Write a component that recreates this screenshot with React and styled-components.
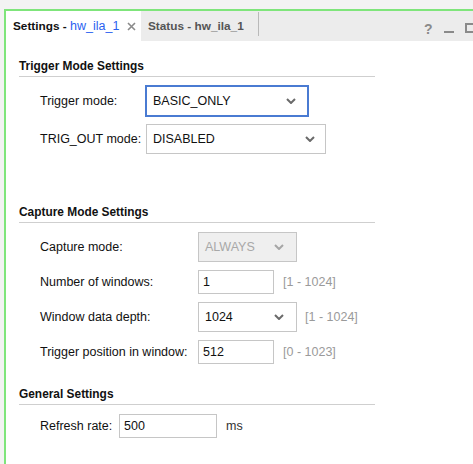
import React from "react";
import styled, { createGlobalStyle } from "styled-components";

const GlobalStyle = createGlobalStyle`
  html, body { margin: 0; padding: 0; }
  body {
    background: #f3f3f3;
    font-family: "Liberation Sans", Arial, sans-serif;
    color: #111;
    overflow: hidden;
  }
`;

const Frame = styled.div`
  margin: 9px 0 0 4px;
  height: 455px;
  border-top: 2px solid #7fe57b;
  border-left: 2px solid #7fe57b;
  background: #fff;
  display: flex;
  flex-direction: column;
`;

const TabBar = styled.div`
  display: flex;
  align-items: stretch;
  height: 30px;
  background: #ececec;
`;

const Tab = styled.div`
  display: flex;
  align-items: center;
  box-sizing: border-box;
  width: ${(p) => p.$width}px;
  padding-left: 7px;
  background: ${(p) => (p.$active ? "#fff" : "transparent")};
  font-size: 11.8px;
  font-weight: bold;
  color: ${(p) => (p.$active ? "#111" : "#555")};
  white-space: pre;
`;

const TabSub = styled.span`
  font-weight: normal;
  font-size: 12.5px;
  color: #2a5ff0;
`;

const CloseIcon = styled.svg`
  margin-left: 8px;
  margin-top: 1px;
`;

const Separator = styled.div`
  width: 1px;
  background: #b9b9b9;
  margin: 1px 0 5px 0;
`;

const WindowButtons = styled.div`
  margin-left: auto;
  display: flex;
  align-items: center;
  gap: 11px;
  padding-top: 1px;
`;

const HelpGlyph = styled.span`
  font-size: 14px;
  font-weight: bold;
  color: #8a8a8a;
  width: 9px;
  margin-top: 4px;
`;

const MinGlyph = styled.span`
  width: 10px;
  height: 2px;
  background: #8a8a8a;
  margin-top: 10px;
`;

const MaxGlyph = styled.span`
  box-sizing: border-box;
  width: 10px;
  height: 10px;
  border: 2px solid #8a8a8a;
  margin-top: 3px;
  margin-right: -2px;
`;

const Content = styled.div`
  padding-left: 13px;
  display: flex;
  flex-direction: column;
`;

const SectionHeader = styled.div`
  margin-top: ${(p) => p.$top}px;
  width: 356px;
  height: 19px;
  line-height: 19px;
  font-size: 11.9px;
  font-weight: bold;
  color: #111;
  border-bottom: 1px solid #cfcfcf;
`;

const Rows = styled.div`
  margin-top: ${(p) => p.$top}px;
  padding-left: 21px;
  display: flex;
  flex-direction: column;
  gap: ${(p) => p.$gap}px;
`;

const Row = styled.div`
  display: grid;
  grid-template-columns: ${(p) => p.$label}px auto auto;
  justify-content: start;
  align-items: center;
  height: 30px;
`;

const Label = styled.span`
  font-size: 12.5px;
  color: #111;
  white-space: nowrap;
`;

const SelectBox = styled.div`
  box-sizing: border-box;
  width: ${(p) => p.$width}px;
  height: 30px;
  display: flex;
  align-items: center;
  padding: 0 ${(p) => p.$right}px 0 6px;
  border: 1px solid ${(p) => (p.$focused ? "#4a7bd2" : "#c6c6c6")};
  box-shadow: ${(p) => (p.$focused ? "0 0 0 1px #4a7bd2" : "none")};
  background: ${(p) => (p.$disabled ? "#efefef" : "#fff")};
  color: ${(p) => (p.$disabled ? "#a8a8a8" : "#111")};
  font-size: 12.5px;
`;

const SelectText = styled.span`
  flex: 1;
`;

const InputBox = styled.div`
  box-sizing: border-box;
  width: ${(p) => p.$width}px;
  height: 24px;
  display: flex;
  align-items: center;
  padding-left: 4px;
  border: 1px solid #c6c6c6;
  background: #fff;
  font-size: 12.5px;
  color: #111;
`;

const Hint = styled.span`
  font-size: 12.5px;
  color: ${(p) => (p.$dark ? "#333" : "#9a9a9a")};
  margin-left: ${(p) => p.$offset}px;
`;

const Chevron = ({ disabled }) => (
  <svg width="10" height="6" viewBox="0 0 10 6">
    <polyline
      points="1,1 5,5 9,1"
      fill="none"
      stroke={disabled ? "#a6a6a6" : "#6a6a6a"}
      strokeWidth="2"
    />
  </svg>
);

const Select = ({ value, width, right = 11, focused, disabled }) => (
  <SelectBox $width={width} $right={right} $focused={focused} $disabled={disabled}>
    <SelectText>{value}</SelectText>
    <Chevron disabled={disabled} />
  </SelectBox>
);

export default function App() {
  return (
    <>
      <GlobalStyle />
      <Frame>
        <TabBar>
          <Tab $active $width={135}>
            {"Settings - "}
            <TabSub>hw_ila_1</TabSub>
            <CloseIcon width="9" height="9" viewBox="0 0 9 9">
              <path d="M1 1 L8 8 M8 1 L1 8" stroke="#8a8a8a" strokeWidth="1.6" />
            </CloseIcon>
          </Tab>
          <Tab $width={117}>{"Status - hw_ila_1"}</Tab>
          <Separator />
          <WindowButtons>
            <HelpGlyph>?</HelpGlyph>
            <MinGlyph />
            <MaxGlyph />
          </WindowButtons>
        </TabBar>
        <Content>
          <SectionHeader $top={16}>Trigger Mode Settings</SectionHeader>
          <Rows $top={9} $gap={8}>
            <Row $label={106}>
              <Label>Trigger mode:</Label>
              <Select value="BASIC_ONLY" width={162} right={11} focused />
            </Row>
            <Row $label={106}>
              <Label>TRIG_OUT mode:</Label>
              <Select value="DISABLED" width={180} right={10} />
            </Row>
          </Rows>

          <SectionHeader $top={49}>Capture Mode Settings</SectionHeader>
          <Rows $top={9} $gap={5}>
            <Row $label={158}>
              <Label>Capture mode:</Label>
              <Select value="ALWAYS" width={99} right={12} disabled />
            </Row>
            <Row $label={158}>
              <Label>Number of windows:</Label>
              <InputBox $width={76}>1</InputBox>
              <Hint $offset={9}>[1 - 1024]</Hint>
            </Row>
            <Row $label={158}>
              <Label>Window data depth:</Label>
              <Select value="1024" width={99} right={12} />
              <Hint $offset={8}>[1 - 1024]</Hint>
            </Row>
            <Row $label={158}>
              <Label>Trigger position in window:</Label>
              <InputBox $width={76}>512</InputBox>
              <Hint $offset={9}>[0 - 1023]</Hint>
            </Row>
          </Rows>

          <SectionHeader $top={18}>General Settings</SectionHeader>
          <Rows $top={6} $gap={0}>
            <Row $label={79}>
              <Label>Refresh rate:</Label>
              <InputBox $width={98}>500</InputBox>
              <Hint $dark $offset={9}>ms</Hint>
            </Row>
          </Rows>
        </Content>
      </Frame>
    </>
  );
}
